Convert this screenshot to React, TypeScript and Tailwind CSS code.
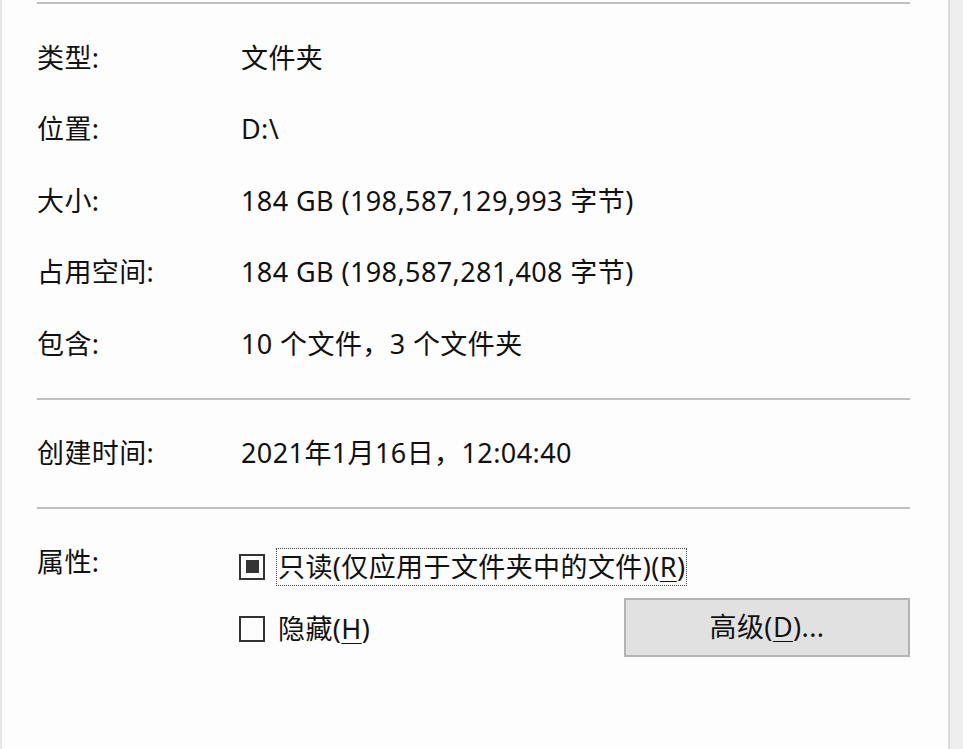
import React from "react";

const font = {
  fontFamily: '"Noto Sans", "Noto Sans CJK SC", sans-serif',
};

function Row({ label, value, h = "h-[71.5px]" }: { label: string; value: React.ReactNode; h?: string }) {
  return (
    <div className={`flex items-center ${h}`}>
      <div className="w-[204px] shrink-0">{label}</div>
      <div>{value}</div>
    </div>
  );
}

function Divider() {
  return <div className="h-[2px] bg-[#c0c0c0]" />;
}

export default function App() {
  return (
    <div
      className="w-[963px] h-[749px] flex bg-[#fdfdfd] text-[27px] tracking-[0.4px] leading-[36px] text-[#111] border-l-2 border-[#e6e6e6] overflow-hidden"
      style={font}
    >
      <div className="flex-1 pl-[35px] pr-[38px] pt-[2px]">
        <Divider />
        <div className="mt-[18px]">
          <Row label="类型:" value="文件夹" />
          <Row label="位置:" value="D:\" />
          <Row label="大小:" value="184 GB (198,587,129,993 字节)" />
          <Row label="占用空间:" value="184 GB (198,587,281,408 字节)" />
          <Row label="包含:" value="10 个文件，3 个文件夹" />
        </div>
        <div className="mt-[18px]">
          <Divider />
        </div>
        <div className="mt-[17px]">
          <Row label="创建时间:" value="2021年1月16日，12:04:40" h="h-[72px]" />
        </div>
        <div className="mt-[18px]">
          <Divider />
        </div>
        <div className="flex">
          <div className="w-[202px] shrink-0 pt-[35px]">属性:</div>
          <div className="flex-1">
            <div className="mt-[38px] h-[40px] flex items-center">
              <div className="w-[26px] h-[26px] border-2 border-[#333] flex items-center justify-center shrink-0">
                <div className="w-[13px] h-[13px] bg-[#333]" />
              </div>
              <div className="ml-[11px] h-[38px] flex items-center px-[1px] border border-dotted border-[#444] whitespace-nowrap">
                只读(仅应用于文件夹中的文件)(<span className="underline underline-offset-[4px] decoration-1">R</span>)
              </div>
            </div>
            <div className="mt-[11px] flex items-center justify-between">
              <div className="flex items-center pt-[4px]">
                <div className="w-[26px] h-[26px] border-2 border-[#333] shrink-0" />
                <div className="ml-[13px]">
                  隐藏(<span className="underline underline-offset-[4px] decoration-1">H</span>)
                </div>
              </div>
              <button className="w-[286px] h-[59px] bg-[#e1e1e1] border-2 border-[#b4b4b4] flex items-center justify-center text-[27px]">
                高级(<span className="underline underline-offset-[4px] decoration-1">D</span>)...
              </button>
            </div>
          </div>
        </div>
      </div>
      <div className="w-[15px] shrink-0 border-l-2 border-[#dadada] bg-[#eeeeee]" />
    </div>
  );
}
